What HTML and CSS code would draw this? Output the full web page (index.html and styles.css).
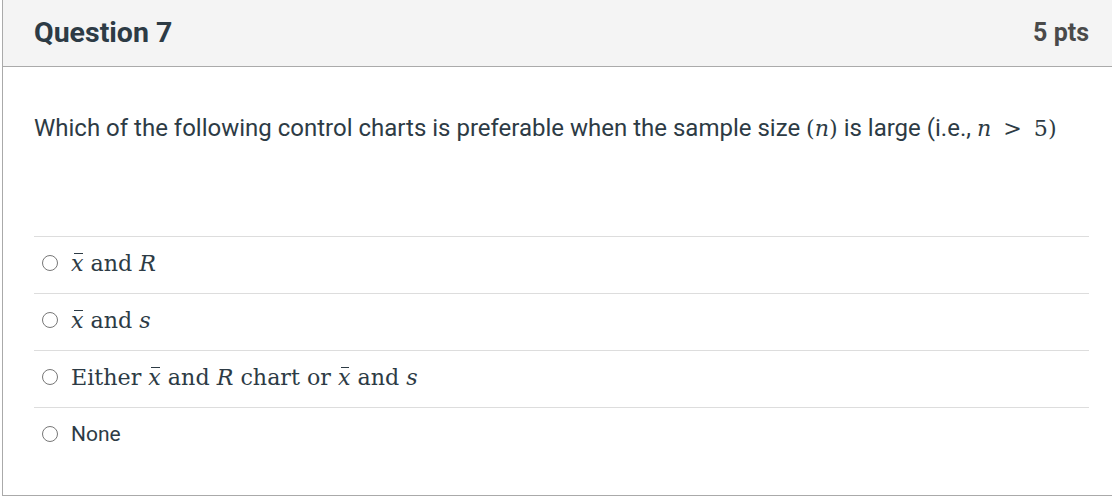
FILE: index.html
```html
<!DOCTYPE html>
<html>
<head>
<meta charset="utf-8">
<link rel="stylesheet" href="styles.css">
</head>
<body>
<div class="card">
  <div class="header">
    <h2 class="title">Question 7</h2>
    <div class="pts">5 pts</div>
  </div>
  <div class="body">
    <p class="question">Which of the following control charts is preferable when the sample size <span class="m">(<i>n</i>)</span> is large (i.e., <span class="m"><i>n</i><span class="rel">&gt;</span>5)</span></p>
    <div class="answers">
      <div class="answer"><span class="radio"></span><span class="m"><i class="bar">x</i> and <i>R</i></span></div>
      <div class="answer"><span class="radio"></span><span class="m"><i class="bar">x</i> and <i>s</i></span></div>
      <div class="answer"><span class="radio"></span><span class="m">Either <i class="bar">x</i> and <i>R</i> chart or <i class="bar">x</i> and <i>s</i></span></div>
      <div class="answer"><span class="radio"></span><span class="plain">None</span></div>
    </div>
  </div>
</div>
</body>
</html>
```
FILE: styles.css
```css
html, body {
  margin: 0;
  padding: 0;
  overflow: hidden;
  background: #ffffff;
}
body {
  font-family: Roboto, "Liberation Sans", sans-serif;
  color: #2d3b45;
}
.card {
  margin-left: 2px;
  margin-right: -9px;
  border-left: 1px solid #aaaaaa;
  border-right: 1px solid #aaaaaa;
  border-bottom: 1px solid #aaaaaa;
  height: 496px;
  box-sizing: border-box;
}
.header {
  height: 67px;
  box-sizing: border-box;
  background: #f4f4f4;
  border-bottom: 1px solid #aaaaaa;
  display: flex;
  align-items: center;
  justify-content: space-between;
  padding: 0 31px 2px 31px;
}
.title {
  margin: 0;
  font-size: 28.5px;
  font-weight: 700;
  color: #2d3b45;
}
.pts {
  font-size: 25px;
  font-weight: 700;
  color: #4a4a4a;
}
.body {
  padding: 0 31px;
}
.question {
  margin: 0;
  padding-top: 47px;
  height: 169px;
  box-sizing: border-box;
  font-size: 24px;
  line-height: 28px;
  color: #2d3b45;
}
.m {
  font-family: "DejaVu Serif", "Liberation Serif", serif;
  font-size: 22.2px;
}
.m i {
  font-style: italic;
}
.rel {
  margin: 0 12px;
}
.bar {
  position: relative;
  display: inline-block;
}
.bar::after {
  content: "";
  position: absolute;
  left: 3px;
  right: 1px;
  top: 3px;
  border-top: 1.5px solid #2d3b45;
}
.answer {
  height: 57px;
  box-sizing: border-box;
  border-top: 1px solid #dddddd;
  display: flex;
  align-items: center;
  padding-left: 8px;
  padding-bottom: 4px;
  gap: 13px;
  color: #2d3b45;
}
.radio {
  width: 14px;
  height: 14px;
  border: 1.5px solid #777777;
  border-radius: 50%;
  flex: none;
}
.plain {
  font-size: 21px;
}
```
